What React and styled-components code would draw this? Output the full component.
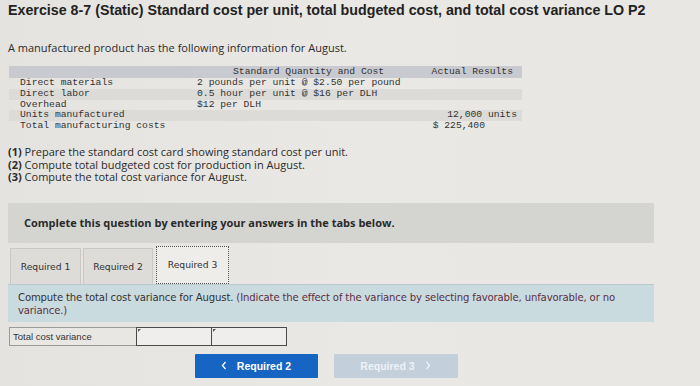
import React from "react";
import styled, { createGlobalStyle } from "styled-components";

const Global = createGlobalStyle`
  html, body { margin: 0; padding: 0; background: #e7e6e2; }
  body { font-family: "Liberation Sans", Arial, sans-serif; color: #262626; }
`;

const Page = styled.div`
  width: 700px;
  height: 386px;
  padding: 0 8px;
  box-sizing: border-box;
  overflow: hidden;
  background: linear-gradient(90deg, #e4e3df 0%, #e9e8e4 50%, #e8e7e3 100%);
`;

const Content = styled.div`
  width: 646px;
`;

const Title = styled.h1`
  margin: 0;
  font-family: "Liberation Sans", Arial, sans-serif;
  font-weight: 700;
  font-size: 14.25px;
  line-height: 20px;
  color: #222;
  white-space: nowrap;
`;

const Intro = styled.p`
  margin: 21px 0 0;
  font-family: "Open Sans", "Liberation Sans", sans-serif;
  font-size: 11px;
  line-height: 14px;
  color: #2b2b2b;
`;

const DataTable = styled.div`
  margin: 11px 0 0 1px;
  width: 513px;
  font-family: "Liberation Mono", "Courier New", monospace;
  font-size: 9.7px;
  color: #333;
`;

const Row = styled.div`
  display: grid;
  grid-template-columns: 188px 231px 94px;
  height: ${(p) => (p.$head ? "12px" : "10.8px")};
  line-height: ${(p) => (p.$head ? "12px" : "10.8px")};
  background: ${(p) => (p.$head ? "#c8cacf" : p.$shade ? "#dcdbd7" : "transparent")};
  white-space: pre;
`;

const Cell = styled.div`
  padding-left: ${(p) => p.$pl || 0}px;
  padding-right: ${(p) => p.$pr || 0}px;
  text-align: ${(p) => (p.$right ? "right" : "left")};
`;

const Questions = styled.ol`
  list-style: none;
  margin: 14px 0 0;
  padding: 0;
  font-family: "Open Sans", "Liberation Sans", sans-serif;
  font-size: 11px;
  line-height: 12.6px;
  color: #2b2b2b;
  b { font-weight: 700; }
`;

const Instruction = styled.div`
  margin-top: 19px;
  height: 40px;
  background: #d4d4d1;
  display: flex;
  align-items: center;
  padding-left: 16px;
  font-family: "Open Sans", "Liberation Sans", sans-serif;
  font-weight: 700;
  font-size: 11px;
  color: #2a2a2a;
`;

const Tabs = styled.div`
  display: flex;
  gap: 2px;
  margin-top: 3px;
  padding-left: 2px;
  align-items: flex-end;
`;

const Tab = styled.div`
  width: ${(p) => p.$w}px;
  height: ${(p) => (p.$active ? 38 : 36)}px;
  box-sizing: border-box;
  display: flex;
  align-items: center;
  justify-content: center;
  font-family: "DejaVu Sans", Verdana, sans-serif;
  font-size: 9.2px;
  color: #333;
  background: ${(p) => (p.$active ? "#eeedea" : "#dddcd8")};
  border: ${(p) => (p.$active ? "1px dotted #555" : "1px solid #c9c8c5")};
  border-bottom: ${(p) => (p.$active ? "1px dotted #555" : "none")};
  margin-left: ${(p) => (p.$active ? 1 : 0)}px;
`;

const Info = styled.div`
  height: 38px;
  box-sizing: border-box;
  background: #cadbe0;
  border-top: 1px solid #b9c9ce;
  padding: 6px 18px 0 10px;
  font-family: "DejaVu Sans", Verdana, sans-serif;
  font-size: 10.1px;
  letter-spacing: -0.15px;
  line-height: 13px;
  color: #333;
  span { color: #5e2f40; }
`;

const AnswerRow = styled.div`
  display: flex;
  margin: 5px 0 0 1px;
  height: 19px;
`;

const Label = styled.div`
  width: 127px;
  box-sizing: border-box;
  border: 1px solid #9a9a98;
  border-right: none;
  background: #e8e7e4;
  padding-left: 3px;
  display: flex;
  align-items: center;
  font-size: 9.5px;
  color: #333;
`;

const Input = styled.div`
  position: relative;
  width: ${(p) => p.$w}px;
  box-sizing: border-box;
  border: 1px solid #4a4a4a;
  border-left: ${(p) => (p.$first ? "1px solid #4a4a4a" : "none")};
  background: #efeeec;
  &::before {
    content: "";
    position: absolute;
    top: 1px;
    left: 1px;
    border-top: 3px solid #555;
    border-right: 3px solid transparent;
  }
`;

const Nav = styled.div`
  display: flex;
  justify-content: center;
  gap: 16px;
  margin-top: 8px;
  padding-right: 10px;
`;

const NavButton = styled.div`
  width: ${(p) => p.$w}px;
  height: 24px;
  display: flex;
  align-items: center;
  justify-content: center;
  gap: 10px;
  font-family: "Liberation Sans", Arial, sans-serif;
  font-weight: 700;
  font-size: 10.5px;
  background: ${(p) => (p.$disabled ? "#c4cfdc" : "#1765c2")};
  color: ${(p) => (p.$disabled ? "#eef2f6" : "#fff")};
  border-radius: 1px;
  svg { display: block; }
`;

const Chevron = ({ dir, color }) => (
  <svg width="6" height="9" viewBox="0 0 6 9">
    <path
      d={dir === "left" ? "M4.5 1 L1.5 4.5 L4.5 8" : "M1.5 1 L4.5 4.5 L1.5 8"}
      fill="none"
      stroke={color}
      strokeWidth="1.3"
    />
  </svg>
);

const rows = [
  ["Direct materials", "2 pounds per unit @ $2.50 per pound", ""],
  ["Direct labor", "0.5 hour per unit @ $16 per DLH", ""],
  ["Overhead", "$12 per DLH", ""],
  ["Units manufactured", "", "12,000 units"],
  ["Total manufacturing costs", "", "$ 225,400"],
];

export default function App() {
  return (
    <Page>
      <Global />
      <Content>
        <Title>
          Exercise 8-7 (Static) Standard cost per unit, total budgeted cost, and total cost variance LO P2
        </Title>
        <Intro>A manufactured product has the following information for August.</Intro>
        <DataTable>
          <Row $head>
            <Cell />
            <Cell $pl={36}>Standard Quantity and Cost</Cell>
            <Cell $right $pr={9}>Actual Results</Cell>
          </Row>
          {rows.map((r, i) => (
            <Row key={r[0]} $shade={i % 2 === 1}>
              <Cell $pl={11}>{r[0]}</Cell>
              <Cell>{r[1]}</Cell>
              <Cell $right $pr={i === 4 ? 37 : 5}>{r[2]}</Cell>
            </Row>
          ))}
        </DataTable>
        <Questions>
          <li><b>(1)</b> Prepare the standard cost card showing standard cost per unit.</li>
          <li><b>(2)</b> Compute total budgeted cost for production in August.</li>
          <li><b>(3)</b> Compute the total cost variance for August.</li>
        </Questions>
        <Instruction>Complete this question by entering your answers in the tabs below.</Instruction>
        <Tabs>
          <Tab $w={71}>Required 1</Tab>
          <Tab $w={70}>Required 2</Tab>
          <Tab $w={73} $active>Required 3</Tab>
        </Tabs>
        <Info>
          Compute the total cost variance for August.{" "}
          <span>(Indicate the effect of the variance by selecting favorable, unfavorable, or no variance.)</span>
        </Info>
        <AnswerRow>
          <Label>Total cost variance</Label>
          <Input $w={76} $first />
          <Input $w={75} />
        </AnswerRow>
        <Nav>
          <NavButton $w={123}>
            <Chevron dir="left" color="#fff" />
            Required 2
          </NavButton>
          <NavButton $w={124} $disabled>
            Required 3
            <Chevron dir="right" color="#eef2f6" />
          </NavButton>
        </Nav>
      </Content>
    </Page>
  );
}
